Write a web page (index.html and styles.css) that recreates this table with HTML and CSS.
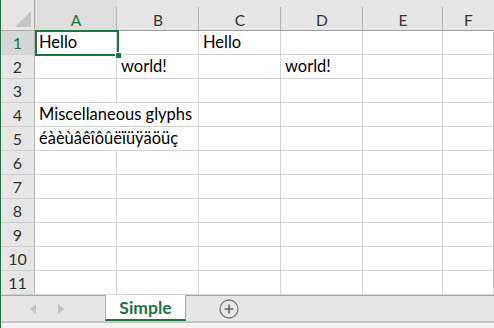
FILE: index.html
```html
<!DOCTYPE html>
<html>
	<head>
		<meta charset="utf-8">
		<link rel="stylesheet" href="styles.css">
	</head>
	<body>
		<div class="app">
			<div class="sheet">
				<div class="corner"><svg width="18" height="18" viewBox="0 0 18 18"><polygon points="17,1 17,17 1,17" fill="#c6c6c6"/></svg></div>
				<div class="colhead active">A</div>
				<div class="colhead">B</div>
				<div class="colhead">C</div>
				<div class="colhead">D</div>
				<div class="colhead">E</div>
				<div class="colhead last">F</div>

				<div class="rowhead active">1</div>
				<div class="cell">Hello</div><div class="cell"></div><div class="cell">Hello</div><div class="cell"></div><div class="cell"></div><div class="cell"></div>

				<div class="rowhead">2</div>
				<div class="cell"></div><div class="cell">world!</div><div class="cell"></div><div class="cell">world!</div><div class="cell"></div><div class="cell"></div>

				<div class="rowhead">3</div>
				<div class="cell"></div><div class="cell"></div><div class="cell"></div><div class="cell"></div><div class="cell"></div><div class="cell"></div>

				<div class="rowhead">4</div>
				<div class="cell spill">Miscellaneous glyphs</div><div class="cell"></div><div class="cell"></div><div class="cell"></div><div class="cell"></div><div class="cell"></div>

				<div class="rowhead">5</div>
				<div class="cell spill">éàèùâêîôûëïüÿäöüç</div><div class="cell"></div><div class="cell"></div><div class="cell"></div><div class="cell"></div><div class="cell"></div>

				<div class="rowhead">6</div>
				<div class="cell"></div><div class="cell"></div><div class="cell"></div><div class="cell"></div><div class="cell"></div><div class="cell"></div>

				<div class="rowhead">7</div>
				<div class="cell"></div><div class="cell"></div><div class="cell"></div><div class="cell"></div><div class="cell"></div><div class="cell"></div>

				<div class="rowhead">8</div>
				<div class="cell"></div><div class="cell"></div><div class="cell"></div><div class="cell"></div><div class="cell"></div><div class="cell"></div>

				<div class="rowhead">9</div>
				<div class="cell"></div><div class="cell"></div><div class="cell"></div><div class="cell"></div><div class="cell"></div><div class="cell"></div>

				<div class="rowhead">10</div>
				<div class="cell"></div><div class="cell"></div><div class="cell"></div><div class="cell"></div><div class="cell"></div><div class="cell"></div>

				<div class="rowhead">11</div>
				<div class="cell"></div><div class="cell"></div><div class="cell"></div><div class="cell"></div><div class="cell"></div><div class="cell"></div>

				<!-- selected cell A1 -->
				<div class="selection"><div class="handle"></div></div>
			</div>

			<div class="tabbar">
				<div class="tabnav">
					<svg width="6" height="10" viewBox="0 0 6 10"><polygon points="6,0 6,10 0,5" fill="#c3c3c3"/></svg>
					<svg width="6" height="10" viewBox="0 0 6 10"><polygon points="0,0 0,10 6,5" fill="#c3c3c3"/></svg>
				</div>
				<div class="tab">Simple</div>
				<div class="addsheet">
					<svg width="20" height="20" viewBox="0 0 20 20">
						<circle cx="10" cy="10" r="9" fill="none" stroke="#7a7a7a" stroke-width="1.3"/>
						<path d="M10 5.5v9M5.5 10h9" stroke="#666" stroke-width="1.6"/>
					</svg>
				</div>
			</div>
			<div class="statusline"></div>
		</div>
	</body>
</html>
```
FILE: styles.css
```css
* {
	margin: 0;
	padding: 0;
	box-sizing: border-box;
}
body {
	font-family: Lato, "Liberation Sans", sans-serif;
	background-color: #ffffff;
}
.app {
	width: 494px;
	height: 328px;
	border-left: 1px solid #217346;
	display: flex;
	flex-direction: column;
	overflow: hidden;
}
.sheet {
	position: relative;
	display: grid;
	grid-template-columns: 34px 82px 82px 82px 82px 80px 1fr;
	grid-template-rows: 31px repeat(11, 24px);
	background-color: #ffffff;
}
.corner {
	background-color: #e6e6e6;
	border-bottom: 1px solid #ababab;
	border-right: 1px solid #ababab;
	display: flex;
	justify-content: flex-end;
	align-items: flex-end;
	padding: 0 2px 2px 0;
}
.colhead {
	background: linear-gradient(#b5b5b5, #b5b5b5) right bottom / 1px 23px no-repeat, #e6e6e6;
	border-bottom: 1px solid #9f9f9f;
	display: flex;
	justify-content: center;
	align-items: center;
	padding-top: 10px;
	font-size: 15.5px;
	color: #333333;
}
.colhead.last {
	background: #e6e6e6;
}
.colhead.active {
	background: linear-gradient(#b5b5b5, #b5b5b5) right bottom / 1px 23px no-repeat, #dedede;
	color: #217346;
}
.rowhead {
	background-color: #e6e6e6;
	border-right: 1px solid #b5b5b5;
	border-bottom: 1px solid #cfcfcf;
	display: flex;
	justify-content: center;
	align-items: flex-end;
	padding-bottom: 2px;
	font-size: 16px;
	color: #333333;
}
.rowhead.active {
	background-color: #d6d6d6;
	color: #217346;
}
.cell {
	border-right: 1px solid #d4d4d4;
	border-bottom: 1px solid #d4d4d4;
	display: flex;
	align-items: flex-end;
	padding: 0 4px 2px 4px;
	font-size: 16.5px;
	color: #000000;
	white-space: nowrap;
	overflow: visible;
}
.cell.spill {
	border-right-color: transparent;
}
.selection {
	position: absolute;
	left: 34px;
	top: 30px;
	width: 84px;
	height: 26px;
	border: 2px solid #217346;
}
.handle {
	position: absolute;
	right: -5px;
	bottom: -5px;
	width: 7px;
	height: 7px;
	background-color: #217346;
	border: 1px solid #ffffff;
}
.tabbar {
	display: flex;
	height: 28px;
	background-color: #e6e6e6;
	border-top: 1px solid #a6a6a6;
	border-bottom: 2px solid #c6c6c6;
}
.tabnav {
	width: 104px;
	display: flex;
	align-items: center;
	padding-left: 29px;
	gap: 22px;
}
.tab {
	width: 81px;
	margin-top: -1px;
	height: 26px;
	background-color: #ffffff;
	border-left: 1px solid #a6a6a6;
	border-right: 1px solid #a6a6a6;
	border-bottom: 2px solid #217346;
	display: flex;
	justify-content: center;
	align-items: center;
	font-size: 17.5px;
	font-weight: bold;
	color: #217346;
}
.addsheet {
	margin-left: 33px;
	display: flex;
	align-items: center;
}
.statusline {
	flex: auto;
	background-color: #f3f3f3;
}
```
